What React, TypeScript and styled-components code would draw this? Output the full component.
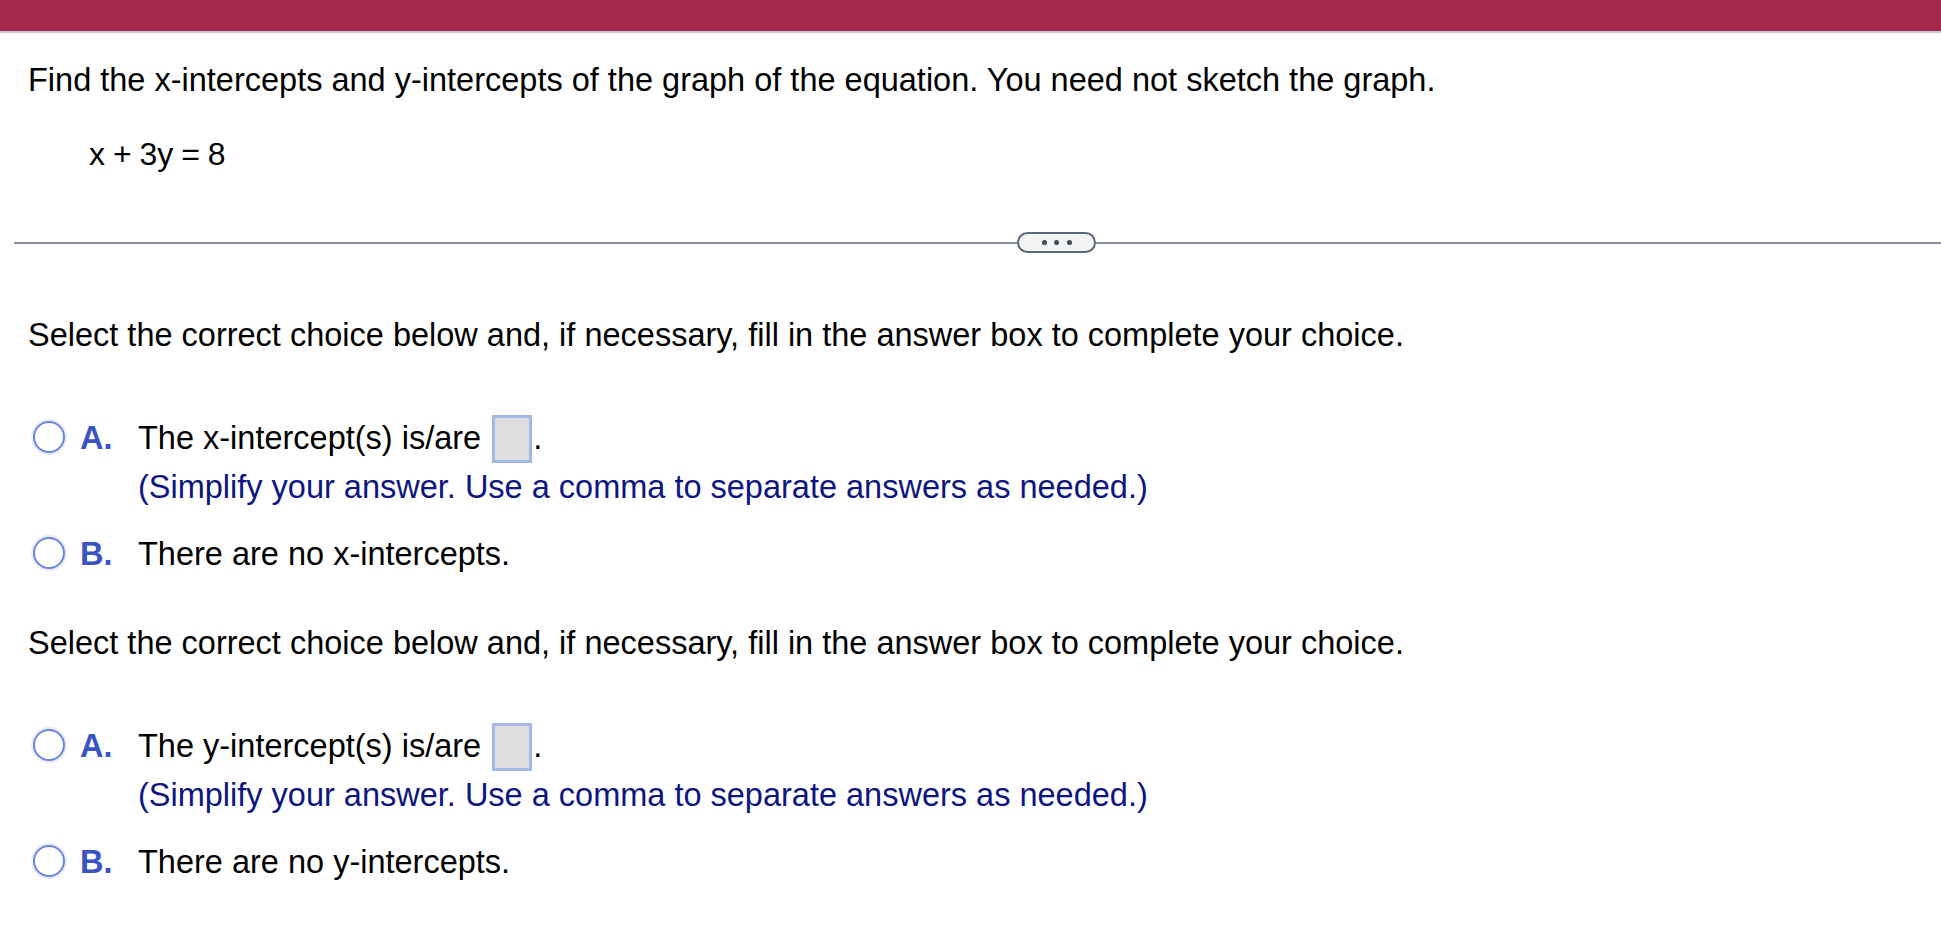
import React from 'react';
import styled, { createGlobalStyle } from 'styled-components';

const GlobalStyle = createGlobalStyle`
  html, body {
    margin: 0;
    padding: 0;
    background: #ffffff;
    overflow-x: hidden;
  }
  body {
    font-family: 'Liberation Sans', Arial, Helvetica, sans-serif;
    color: #000000;
  }
`;

const TopBar = styled.div`
  height: 31px;
  background: #a3284b;
  border-bottom: 2px solid #c8ccd6;
`;

const Main = styled.main`
  font-size: 32.5px;
  line-height: 36px;
`;

const Prompt = styled.div<{ $top: number }>`
  margin-top: ${props => props.$top}px;
  padding-left: 28px;
  white-space: nowrap;
`;

const Equation = styled.div`
  margin-top: 38px;
  padding-left: 89px;
  font-size: 32px;
  white-space: nowrap;
  word-spacing: -1px;
`;

const DividerRow = styled.div`
  margin-top: 60px;
  margin-left: 14px;
  display: flex;
  align-items: center;
  height: 21px;
`;

const Rule = styled.div<{ $width?: number }>`
  height: 2px;
  background: #8b8e9f;
  ${props => (props.$width ? `width: ${props.$width}px; flex: none;` : 'flex: 1;')}
`;

const MorePill = styled.button`
  flex: none;
  box-sizing: border-box;
  width: 79px;
  height: 21px;
  padding: 0;
  border: 2px solid #5d6878;
  border-radius: 11px;
  background: #f3f4f6;
  display: flex;
  align-items: center;
  justify-content: center;
  gap: 7.5px;
`;

const Dot = styled.span`
  width: 5px;
  height: 5px;
  border-radius: 50%;
  background: #474c55;
`;

const ChoiceList = styled.div`
  margin-top: 67px;
`;

const Choice = styled.div<{ $gap?: number }>`
  display: flex;
  align-items: flex-start;
  margin-top: ${props => props.$gap || 0}px;
  white-space: nowrap;
`;

const Radio = styled.span`
  flex: none;
  box-sizing: border-box;
  width: 32px;
  height: 32px;
  margin: 1px 15px 0 33px;
  border-radius: 50%;
  border: 2.5px solid #6b86dc;
  background: #ffffff;
  box-shadow: 0 0 0 2px rgba(214, 220, 236, 0.55);
`;

const Letter = styled.span`
  flex: none;
  width: 58px;
  font-weight: 700;
  color: #3a55c2;
`;

const ChoiceBody = styled.div`
  display: flex;
  flex-direction: column;
`;

const AnswerBox = styled.span`
  display: inline-block;
  box-sizing: border-box;
  width: 40px;
  height: 48px;
  margin: -6px 1px 0 11px;
  vertical-align: -14px;
  border: 3px solid #a5b9e8;
  background: #dedede;
`;

const Hint = styled.div`
  margin-top: 6px;
  color: #0d1680;
`;

interface PartProps {
  axis: 'x' | 'y';
  top: number;
}

const Part: React.FC<PartProps> = ({ axis, top }) => (
  <>
    <Prompt $top={top}>
      Select the correct choice below and, if necessary, fill in the answer box to complete your choice.
    </Prompt>
    <ChoiceList>
      <Choice>
        <Radio />
        <Letter>A.</Letter>
        <ChoiceBody>
          <div>
            The {axis}-intercept(s) is/are<AnswerBox />.
          </div>
          <Hint>(Simplify your answer. Use a comma to separate answers as needed.)</Hint>
        </ChoiceBody>
      </Choice>
      <Choice $gap={31}>
        <Radio />
        <Letter>B.</Letter>
        <ChoiceBody>
          <div>There are no {axis}-intercepts.</div>
        </ChoiceBody>
      </Choice>
    </ChoiceList>
  </>
);

export default function App() {
  return (
    <>
      <GlobalStyle />
      <TopBar />
      <Main>
        <Prompt $top={29}>
          Find the x-intercepts and y-intercepts of the graph of the equation. You need not sketch the graph.
        </Prompt>
        <Equation>x + 3y = 8</Equation>
        <DividerRow>
          <Rule $width={1003} />
          <MorePill aria-label="more">
            <Dot />
            <Dot />
            <Dot />
          </MorePill>
          <Rule />
        </DividerRow>
        <Part axis="x" top={64} />
        <Part axis="y" top={53} />
      </Main>
    </>
  );
}
